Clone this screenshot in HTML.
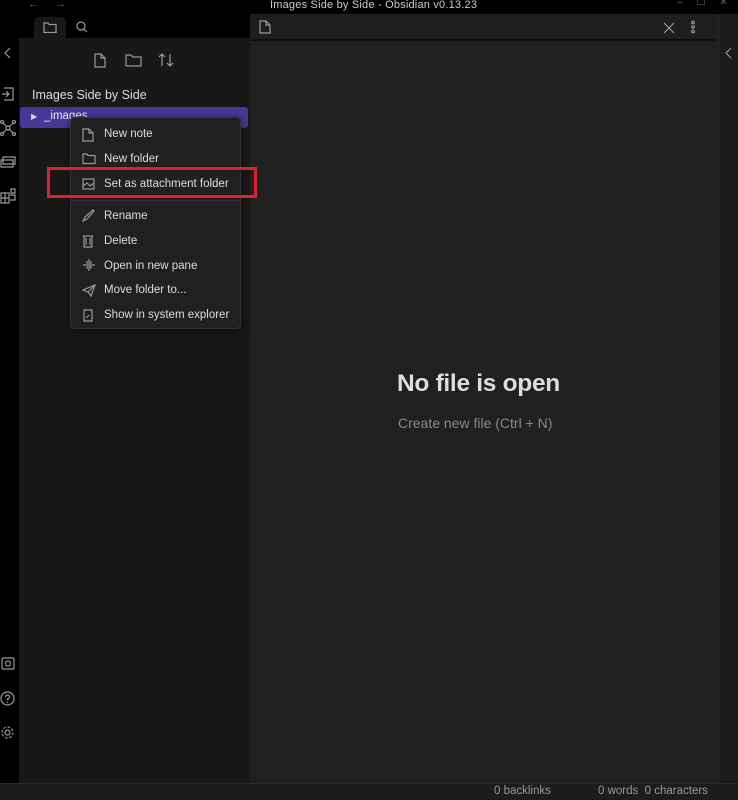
<!DOCTYPE html>
<html><head><style>
*{margin:0;padding:0;box-sizing:border-box}
body{width:738px;height:800px;background:#000;font-family:"Liberation Sans",sans-serif;position:relative;overflow:hidden;color:#dcddde}
.a{position:absolute}
svg{position:absolute;fill:none;stroke:#999;stroke-width:1.2}
.mi{position:absolute;left:33px;font-size:11.5px;color:#dcddde}
.ic{position:absolute;left:11px}
</style></head><body>
<div class="a" style="left:0;top:0;width:738px;height:14px;background:#000"></div>
<div class="a" style="left:270px;top:-1px;font-size:11px;color:#ccc;letter-spacing:.2px">Images Side by Side - Obsidian v0.13.23</div>
<div class="a" style="left:28px;top:-2px;font-size:11px;color:#666">←</div>
<div class="a" style="left:55px;top:-2px;font-size:11px;color:#666">→</div>
<div class="a" style="left:677px;top:-3px;font-size:10px;color:#666">–&nbsp;&nbsp;&nbsp;&nbsp;&nbsp;☐&nbsp;&nbsp;&nbsp;&nbsp;&nbsp;✕</div>
<div class="a" style="left:19px;top:38px;width:231px;height:745px;background:#181818"></div>
<div class="a" style="left:34px;top:17px;width:32px;height:24px;background:#181818;border-radius:5px 5px 0 0"></div>
<svg style="left:43px;top:21px" width="14" height="12"><path d="M1 2h4l1 1.5h7v8H1z"/></svg>
<svg style="left:76px;top:21px" width="12" height="12"><circle cx="5" cy="5" r="4"/><path d="M8 8l3 3"/></svg>
<svg style="left:94px;top:53px" width="12" height="15"><path d="M1 1h6l4 4v9H1zM7 1v4h4"/></svg>
<svg style="left:125px;top:54px" width="17" height="13"><path d="M1 1h5l1.5 2H16v9H1z"/></svg>
<svg style="left:158px;top:52px" width="16" height="16"><path d="M4 14V2M1 5l3-3 3 3M12 2v12M9 11l3 3 3-3"/></svg>
<div class="a" style="left:32px;top:88px;font-size:12.5px;color:#dcddde">Images Side by Side</div>
<div class="a" style="left:20px;top:107px;width:228px;height:21px;background:#483699;border-radius:3px"></div>
<div class="a" style="left:31px;top:112px;font-size:8px;color:#ddd">▶</div>
<div class="a" style="left:44px;top:110px;font-size:11.5px;color:#eee">_images</div>
<svg style="left:2px;top:47px" width="10" height="12"><path d="M8 1L3 6l5 5"/></svg>
<svg style="left:1px;top:87px" width="13" height="14"><path d="M3 1h9v12H3M1 7h7M5 4l3 3-3 3"/></svg>
<svg style="left:0px;top:120px" width="16" height="16"><circle cx="8" cy="8" r="2"/><circle cx="2" cy="2" r="1.5"/><circle cx="14" cy="2" r="1.5"/><circle cx="2" cy="14" r="1.5"/><circle cx="14" cy="14" r="1.5"/><path d="M3 3l4 4M13 3l-4 4M3 13l4-4M13 13l-4-4"/></svg>
<svg style="left:0px;top:156px" width="16" height="12"><path d="M3 1h12v7H3zM1 4h12v7H1z"/></svg>
<svg style="left:0px;top:188px" width="16" height="16"><path d="M1 5h8v10H1zM1 10h8M5 5v10M11 1h4v4h-4zM10 7h5v5h-5"/></svg>
<svg style="left:1px;top:657px" width="14" height="13"><rect x="1" y="1" width="12" height="11" rx="1"/><circle cx="7" cy="6.5" r="2.5"/></svg>
<svg style="left:0px;top:691px" width="15" height="15"><circle cx="7.5" cy="7.5" r="6.5"/><path d="M5.5 6a2 2 0 1 1 2 2v1.5M7.5 11v1"/></svg>
<svg style="left:0px;top:725px" width="15" height="15"><circle cx="7.5" cy="7.5" r="2.5"/><circle cx="7.5" cy="7.5" r="5.5" stroke-dasharray="2.5 1.8"/></svg>
<div class="a" style="left:250px;top:14px;width:470px;height:769px;background:#202020"></div>
<div class="a" style="left:251px;top:15px;width:465px;height:26px;background:#1e1e1e;border-bottom:2px solid #0d0d0d"></div>
<svg style="left:259px;top:20px" width="12" height="14"><path d="M1 1h6l4 4v8H1zM7 1v4h4"/></svg>
<svg style="left:663px;top:22px" width="12" height="12"><path d="M1 1l10 10M11 1L1 11"/></svg>
<svg style="left:690px;top:20px" width="6" height="14"><circle cx="3" cy="2.5" r="1.3"/><circle cx="3" cy="7" r="1.3"/><circle cx="3" cy="11.5" r="1.3"/></svg>
<div class="a" style="left:720px;top:14px;width:18px;height:769px;background:#1b1b1b"></div>
<svg style="left:723px;top:47px" width="10" height="12"><path d="M8 1L3 6l5 5"/></svg>
<div class="a" style="left:397px;top:370px;font-size:24.5px;font-weight:bold;color:#dcddde;letter-spacing:-.3px">No file is open</div>
<div class="a" style="left:398px;top:415px;font-size:14px;color:#888">Create new file (Ctrl + N)</div>
<div class="a" style="left:0;top:783px;width:738px;height:17px;background:#1c1c1c;border-top:1px solid #2a2a2a"></div>
<div class="a" style="left:494px;top:785px;font-size:11.5px;color:#999">0 backlinks</div>
<div class="a" style="left:598px;top:785px;font-size:11.5px;color:#999">0 words&nbsp;&nbsp;0 characters</div>
<div class="a" style="left:70px;top:117px;width:171px;height:212px;background:#202020;border:1px solid #333;border-radius:4px;box-shadow:0 2px 8px rgba(0,0,0,.5)">
<svg class="ic" style="top:10px" width="12" height="14"><path d="M1 1h6l4 4v8H1zM7 1v4h4"/></svg><div class="mi" style="top:10px">New note</div>
<svg class="ic" style="top:35px" width="14" height="12"><path d="M1 1h4l1 1.5h7v8H1z"/></svg><div class="mi" style="top:35px">New folder</div>
<svg class="ic" style="top:60px" width="13" height="12"><rect x="1" y="1" width="11" height="10"/><path d="M1 8l4-3 3 3 4-3"/></svg><div class="mi" style="top:60px">Set as attachment folder</div>
<div class="a" style="left:0;top:82px;width:169px;height:1px;background:#333"></div>
<svg class="ic" style="top:91px" width="13" height="13"><path d="M1 12l2-4 8-7 1 1-7 8z"/></svg><div class="mi" style="top:92px">Rename</div>
<svg class="ic" style="top:116px" width="12" height="14"><path d="M2 2h8v11H2zM1 2h10M4 4v7M8 4v7"/></svg><div class="mi" style="top:117px">Delete</div>
<svg class="ic" style="top:141px" width="14" height="12"><path d="M7 0v12M5 2v8M9 2v8M1 6h3M10 6h3"/></svg><div class="mi" style="top:142px">Open in new pane</div>
<svg class="ic" style="top:166px" width="14" height="13"><path d="M1 6L13 1 9 12 6 8zM6 8l7-7"/></svg><div class="mi" style="top:166px">Move folder to...</div>
<svg class="ic" style="top:191px" width="12" height="13"><path d="M2 1h8v11H2zM4 9l3-3"/></svg><div class="mi" style="top:191px">Show in system explorer</div>
</div>
<div class="a" style="left:47px;top:167px;width:210px;height:31px;border:3px solid #e0202a"></div>
</body></html>
